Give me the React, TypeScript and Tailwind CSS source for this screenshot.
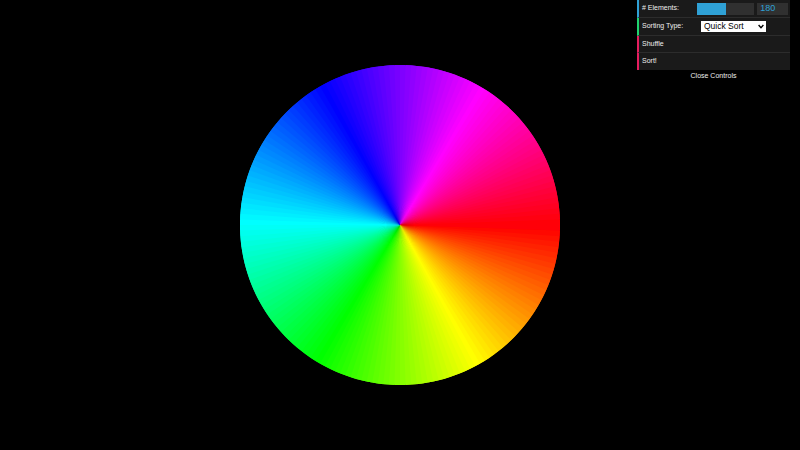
const wedges = Array.from({ length: 180 }, (_, i) => {
  const a0 = (i * 2 * Math.PI) / 180;
  const a1 = ((i + 2) * 2 * Math.PI) / 180;
  const r = 160;
  return {
    d: `M0 0L${(r * Math.cos(a0)).toFixed(3)} ${(r * Math.sin(a0)).toFixed(3)}A${r} ${r} 0 0 1 ${(r * Math.cos(a1)).toFixed(3)} ${(r * Math.sin(a1)).toFixed(3)}Z`,
    color: `hsl(${i * 2}, 100%, 50%)`,
  };
});

export default function App() {
  return (
    <div className="relative flex h-[450px] w-[800px] items-center justify-center overflow-hidden bg-black font-['Liberation_Sans',Arial,sans-serif] antialiased">
      <svg width="320" height="320" viewBox="-160 -160 320 320">
        {wedges.map((w, i) => (
          <path key={i} d={w.d} fill={w.color} />
        ))}
      </svg>
      <div className="absolute right-[10px] top-0 w-[153px] text-[7px] text-[#eeeeee]">
        <div className="flex h-[18px] items-center border-b border-[#2c2c2c] border-l-2 border-l-[#2fa1d6] bg-[#1a1a1a] pl-[3px] pr-[2px]">
          <span className="w-[55px]">&#35; Elements:</span>
          <div className="h-[12px] w-[58px] bg-[#303030]">
            <div className="h-full w-[29px] bg-[#2fa1d6]" />
          </div>
          <div className="ml-[3px] flex h-[12px] w-[31px] items-center bg-[#303030] pl-[3px] text-[9px] text-[#2fa1d6]">180</div>
        </div>
        <div className="flex h-[18px] items-center border-b border-[#2c2c2c] border-l-2 border-l-[#1ed36f] bg-[#1a1a1a] pl-[3px]">
          <span className="w-[59px]">Sorting Type:</span>
          <div className="relative h-[11px] w-[65px]">
            <select className="block h-[11px] w-[65px] appearance-none bg-white pl-[3px] text-[8.5px] leading-[11px] text-black" defaultValue="Quick Sort">
              <option>Quick Sort</option>
            </select>
            <svg className="pointer-events-none absolute right-[2px] top-[3px]" width="6" height="5" viewBox="0 0 6 5" fill="none" stroke="#000" strokeWidth="1.4">
              <path d="M0.6 1L3 3.6L5.4 1" />
            </svg>
          </div>
        </div>
        <div className="flex h-[17px] items-center border-b border-[#2c2c2c] border-l-2 border-l-[#e61d5f] bg-[#1a1a1a] pl-[3px]">Shuffle</div>
        <div className="flex h-[17px] items-center border-l-2 border-l-[#e61d5f] bg-[#1a1a1a] pl-[3px]">Sort!</div>
        <div className="flex h-[12px] items-center justify-center bg-black">Close Controls</div>
      </div>
    </div>
  );
}
